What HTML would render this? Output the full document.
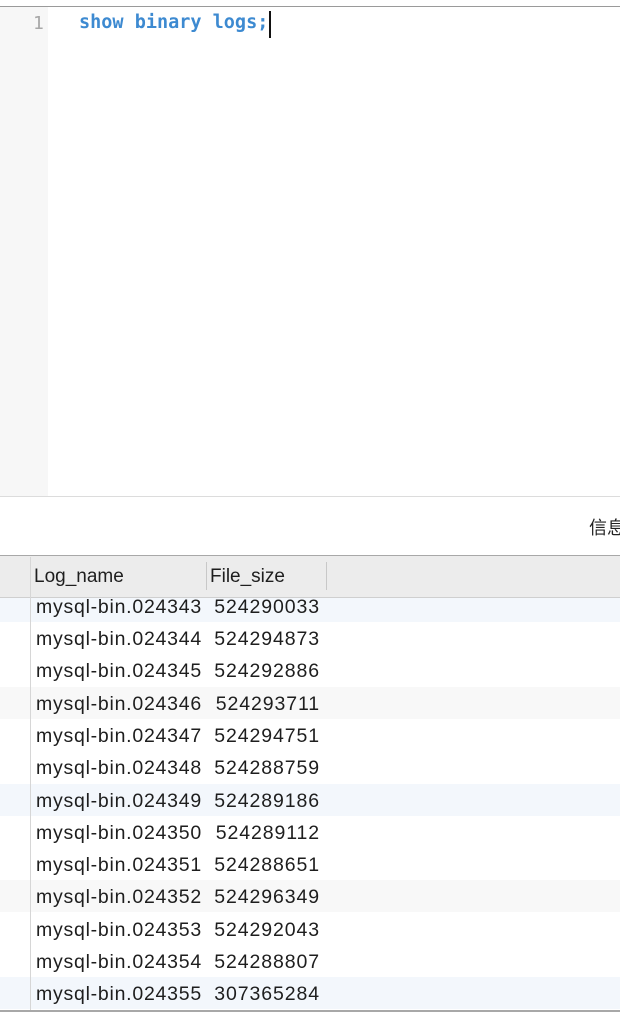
<!DOCTYPE html>
<html><head><meta charset="utf-8"><style>
body{margin:0;width:620px;height:1024px;background:#fff;position:relative;overflow:hidden;font-family:"Liberation Sans","Noto Sans CJK SC",sans-serif}
.a{position:absolute}
.row{position:absolute;left:0;width:620px;height:32px}
.n{position:absolute;left:36px;top:6px;font-size:19.5px;letter-spacing:0.75px;color:#1e1e1e;white-space:nowrap}
.s{position:absolute;right:300px;top:6px;font-size:19.5px;letter-spacing:0.9px;color:#1e1e1e;white-space:nowrap}
</style></head><body>
<div class="a" style="left:0;top:6px;width:620px;height:1px;background:#9a9a9a"></div>
<div class="a" style="left:0;top:7px;width:48px;height:489px;background:#f7f7f7"></div>
<div class="a" style="left:33px;top:13px;font-family:'DejaVu Sans Mono',monospace;font-size:18px;color:#a8a8a8">1</div>
<div class="a" style="left:79px;top:12px;font-family:'DejaVu Sans Mono','Liberation Mono',monospace;font-size:18.5px;font-weight:bold;color:#3d8ad1;white-space:pre">show binary logs;</div>
<div class="a" style="left:269px;top:11px;width:1.5px;height:27px;background:#111"></div>
<div class="a" style="left:0;top:496px;width:620px;height:1px;background:#dcdcdc"></div>
<div class="a" style="left:589px;top:514px;font-size:18px;color:#222;white-space:nowrap">信息</div>

<div class="row" style="top:590px;background:#f3f7fc"></div>
<div class="row" style="top:687px;background:#f8f8f8"></div>
<div class="row" style="top:784px;background:#f3f7fc"></div>
<div class="row" style="top:880px;background:#f8f8f8"></div>
<div class="row" style="top:977px;background:#f3f7fc"></div>

<div class="a" style="left:0;top:555px;width:620px;height:41px;background:#ececec;border-top:1.5px solid #a8a8a8;border-bottom:1px solid #cfcfcf"></div>
<div class="a" style="left:34px;top:566px;font-size:19px;color:#1e1e1e">Log_name</div>
<div class="a" style="left:210px;top:566px;font-size:19px;color:#1e1e1e">File_size</div>
<div class="a" style="left:206px;top:562px;width:1px;height:28px;background:#c8c8c8"></div>
<div class="a" style="left:326px;top:562px;width:1px;height:28px;background:#c8c8c8"></div>
<div class="a" style="left:30px;top:557px;width:1px;height:453px;background:#d6d6d6"></div>
<div class="a" style="left:0;top:1010px;width:620px;height:1.5px;background:#a8a8a8"></div>

<div class="row" style="top:590px"><span class="n">mysql-bin.024343</span><span class="s">524290033</span></div>
<div class="row" style="top:622px"><span class="n">mysql-bin.024344</span><span class="s">524294873</span></div>
<div class="row" style="top:654px"><span class="n">mysql-bin.024345</span><span class="s">524292886</span></div>
<div class="row" style="top:687px"><span class="n">mysql-bin.024346</span><span class="s">524293711</span></div>
<div class="row" style="top:719px"><span class="n">mysql-bin.024347</span><span class="s">524294751</span></div>
<div class="row" style="top:751px"><span class="n">mysql-bin.024348</span><span class="s">524288759</span></div>
<div class="row" style="top:784px"><span class="n">mysql-bin.024349</span><span class="s">524289186</span></div>
<div class="row" style="top:816px"><span class="n">mysql-bin.024350</span><span class="s">524289112</span></div>
<div class="row" style="top:848px"><span class="n">mysql-bin.024351</span><span class="s">524288651</span></div>
<div class="row" style="top:880px"><span class="n">mysql-bin.024352</span><span class="s">524296349</span></div>
<div class="row" style="top:913px"><span class="n">mysql-bin.024353</span><span class="s">524292043</span></div>
<div class="row" style="top:945px"><span class="n">mysql-bin.024354</span><span class="s">524288807</span></div>
<div class="row" style="top:977px"><span class="n">mysql-bin.024355</span><span class="s">307365284</span></div>
</body></html>
